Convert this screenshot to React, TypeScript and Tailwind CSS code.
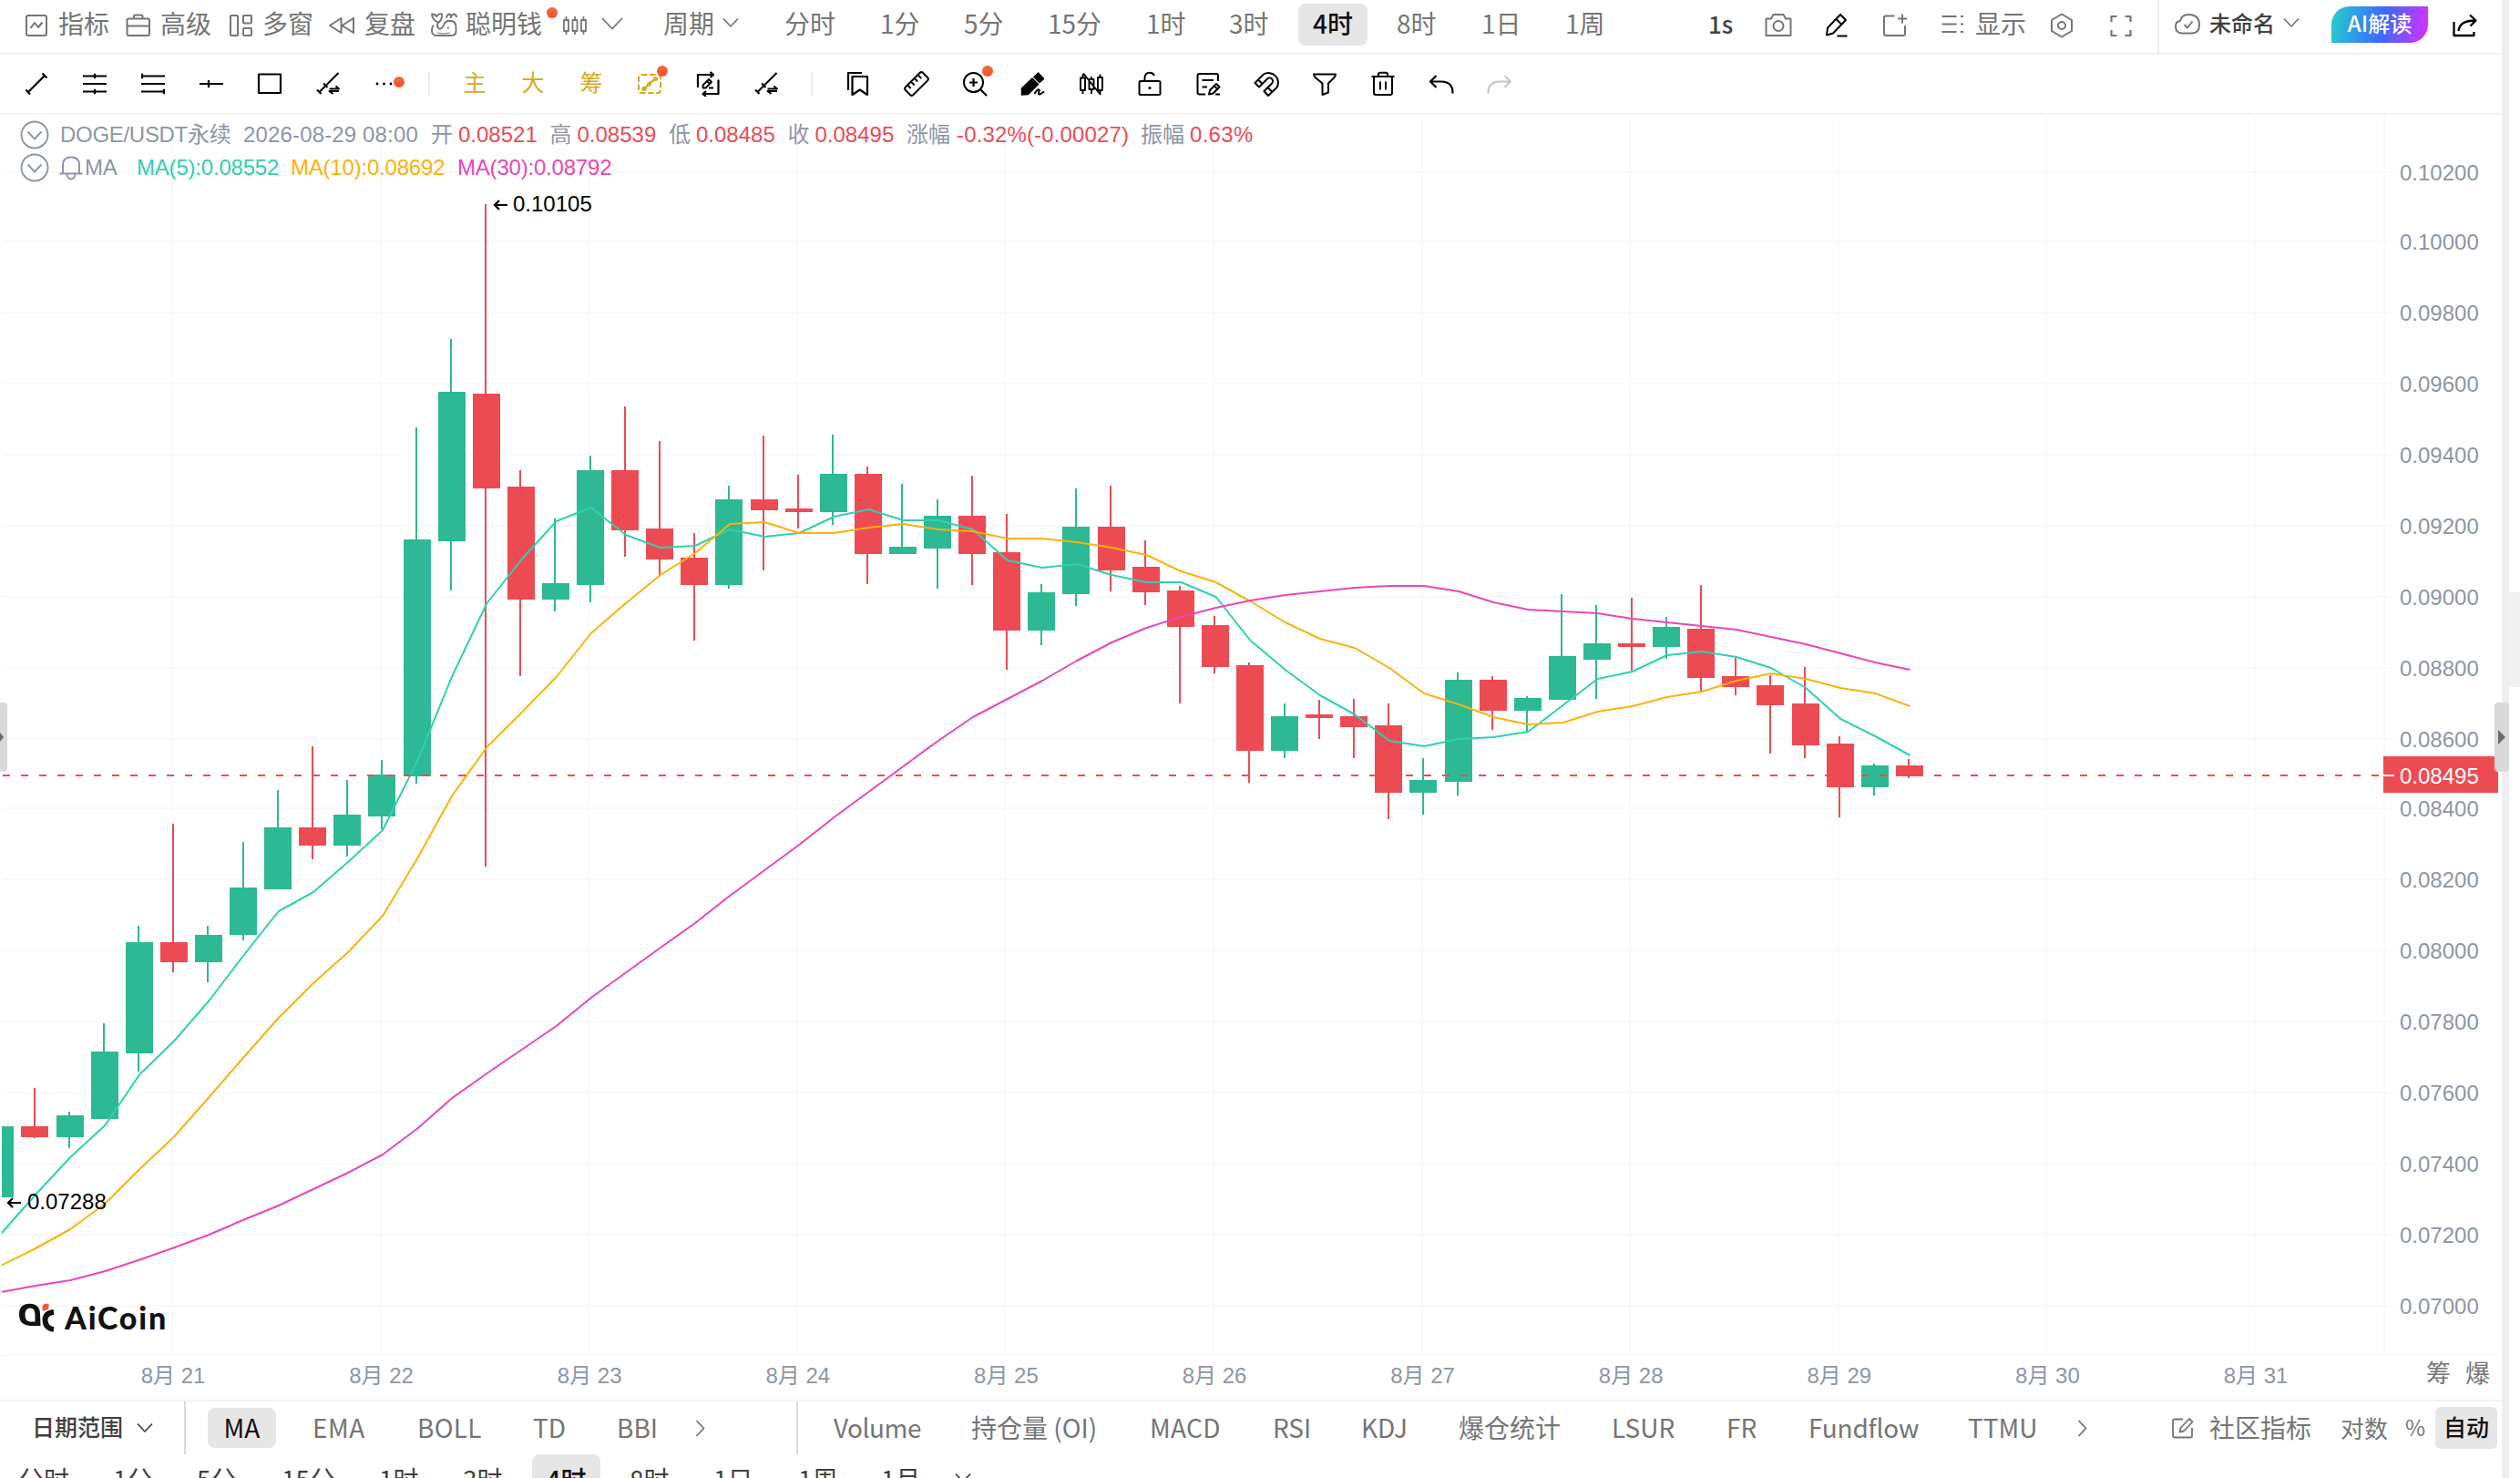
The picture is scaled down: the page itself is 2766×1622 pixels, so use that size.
import React from "react";

type Kids = { children?: React.ReactNode };

/* ---------- market data (vertical positions on the price canvas) ---------- */

type Candle = [up: 0 | 1, high: number, top: number, bottom: number, low: number];

const CANDLES: Candle[] = [
  [1, 1236, 1236, 1314, 1314], [0, 1194, 1236, 1248, 1249], [1, 1220, 1224, 1248, 1260],
  [1, 1123, 1154, 1228, 1228], [1, 1016, 1034, 1156, 1176], [0, 904, 1034, 1056, 1067],
  [1, 1016, 1026, 1056, 1078], [1, 924, 974, 1026, 1032], [1, 867, 908, 976, 976],
  [0, 819, 908, 928, 943], [1, 856, 894, 928, 940], [1, 834, 850, 896, 910],
  [1, 469, 592, 852, 860], [1, 372, 430, 594, 648], [0, 224, 432, 536, 951],
  [0, 516, 534, 658, 742], [1, 569, 640, 658, 671], [1, 500, 516, 642, 661],
  [0, 446, 516, 582, 611], [0, 484, 580, 614, 632], [0, 585, 612, 642, 703],
  [1, 533, 548, 642, 646], [0, 478, 548, 560, 626], [0, 521, 558, 562, 580],
  [1, 477, 520, 562, 576], [0, 512, 520, 608, 641], [1, 531, 600, 608, 608],
  [1, 548, 566, 602, 646], [0, 522, 566, 608, 642], [0, 564, 606, 692, 735],
  [1, 641, 650, 692, 708], [1, 536, 578, 652, 665], [0, 533, 578, 626, 649],
  [0, 593, 622, 650, 664], [0, 643, 648, 688, 772], [0, 676, 686, 732, 739],
  [0, 727, 730, 824, 859], [1, 772, 786, 824, 832], [0, 768, 784, 788, 811],
  [0, 767, 786, 798, 832], [0, 772, 796, 870, 899], [1, 832, 856, 870, 894],
  [1, 738, 746, 858, 873], [0, 742, 746, 780, 801], [1, 764, 766, 780, 803],
  [1, 652, 720, 768, 768], [1, 664, 706, 724, 767], [0, 656, 706, 710, 736],
  [1, 677, 688, 710, 723], [0, 642, 690, 744, 760], [0, 722, 742, 754, 763],
  [0, 741, 752, 774, 827], [0, 732, 772, 818, 832], [0, 808, 816, 864, 897],
  [1, 838, 840, 864, 873], [0, 833, 840, 852, 854],
];

const MA5 = [1354, 1311, 1270, 1235, 1179, 1142, 1098, 1048, 1000, 979, 946, 911, 835, 742, 662, 614, 572, 557, 587, 601, 599, 581, 589, 585, 567, 559, 571, 571, 581, 615, 623, 619, 631, 639, 639, 655, 703, 735, 763, 784, 813, 819, 811, 809, 803, 774, 745, 737, 719, 715, 721, 733, 755, 789, 808, 829];
const MA10 = [1389, 1370, 1349, 1321, 1283, 1247, 1204, 1160, 1117, 1079, 1045, 1005, 942, 873, 820, 782, 743, 695, 662, 631, 607, 575, 573, 585, 585, 579, 575, 581, 583, 591, 591, 595, 601, 609, 627, 639, 660, 683, 701, 711, 733, 761, 773, 787, 795, 793, 781, 775, 765, 759, 747, 739, 745, 755, 761, 775];
const MA30 = [1418, 1411, 1405, 1395, 1382.5, 1369, 1355, 1338.5, 1323, 1305, 1287, 1267, 1238.5, 1205, 1178, 1152, 1126, 1095, 1067.5, 1040, 1013, 983, 955, 927, 897, 869, 841, 813, 787, 767, 747, 725, 705, 689, 677, 667, 659, 653, 649, 645, 643, 643, 649, 661, 669, 671, 673, 679, 683, 687, 691, 699, 707, 717, 727, 735];

const xAt = (i: number) => 0.3 + 38.1 * i;
const linePoints = (ys: number[]) => ys.map((y, i) => `${(xAt(i) + 0.7).toFixed(1)},${y}`).join(" ");
/* grid rows snap to whole two-pixel steps */
const rowY = (i: number) => 2 * Math.floor((188 + i * 77.75) / 2) + 1;

const PRICES = ["0.10200", "0.10000", "0.09800", "0.09600", "0.09400", "0.09200", "0.09000", "0.08800", "0.08600", "0.08400", "0.08200", "0.08000", "0.07800", "0.07600", "0.07400", "0.07200", "0.07000"];
const DAYS = ["21", "22", "23", "24", "25", "26", "27", "28", "29", "30", "31"];

function PriceChart() {
  return (
    <svg width="2746" height="1410" viewBox="0 126 2746 1410" className="block" fontFamily='"Liberation Sans", "Noto Sans CJK SC", sans-serif' fontSize="24">
      <clipPath id="plot"><rect x="2" y="126" width="2614" height="1361" /></clipPath>
      <g stroke="#f8f9fa" strokeWidth="2">
        {PRICES.map((p, i) => <line key={p} x1="3" x2="2628" y1={rowY(i)} y2={rowY(i)} />)}
        {DAYS.map((d, i) => <line key={d} y1="128" y2="1487" x1={Math.round(189 + i * 228.6)} x2={Math.round(189 + i * 228.6)} />)}
        <line x1="2617" x2="2617" y1="126" y2="1487" />
        <line x1="2" x2="2742" y1="1487" y2="1487" />
      </g>
      <g clipPath="url(#plot)">
        {CANDLES.map(([up, high, top, bottom, low], i) => {
          const x = xAt(i);
          return (
            <g key={i} fill={up ? "#2db994" : "#ed4b54"}>
              <rect x={Math.floor(x) - 1} y={high} width="2" height={low - high} />
              <rect x={Math.round(x - 15)} y={top} width="30" height={bottom - top} />
            </g>
          );
        })}
        <g fill="none" strokeWidth="2" strokeLinejoin="round">
          <polyline points={linePoints(MA5)} stroke="#2fd1b2" />
          <polyline points={linePoints(MA10)} stroke="#fcb20c" />
          <polyline points={linePoints(MA30)} stroke="#e947b8" />
        </g>
      </g>
      <line x1="3" x2="2616" y1="851" y2="851" stroke="#ed4b54" strokeWidth="2" strokeDasharray="8 12" />
      <g fill="#8d96a5">
        {PRICES.map((p, i) => <text key={p} x="2634" y={rowY(i) + 9}>{p}</text>)}
        {DAYS.map((d, i) => <text key={d} x={190 + i * 228.6} y="1518" textAnchor="middle">8月 {d}</text>)}
      </g>
      <rect x="2616" y="830" width="126" height="40" fill="#ed4b54" />
      <line x1="2616" x2="2628" y1="851" y2="851" stroke="#fff" strokeWidth="2" />
      <text x="2634" y="860" fill="#fff">0.08495</text>
      <g fill="#000" stroke="none">
        <text x="563" y="232">0.10105</text>
        <text x="30" y="1327">0.07288</text>
      </g>
      <g fill="none" stroke="#000" strokeWidth="2.2">
        <path d="M557 225H543M548 220L543 225L548 230" />
        <path d="M23 1320H9M14 1315L9 1320L14 1325" />
      </g>
    </svg>
  );
}

/* ---------- icons ---------- */

function Ico({ children, w = 28, sw = 2, className = "" }: Kids & { w?: number; sw?: number; className?: string }) {
  return (
    <svg width={w} height="28" viewBox={`0 0 ${w} 28`} fill="none" stroke="currentColor" strokeWidth={sw} strokeLinejoin="round" className={`shrink-0 ${className}`}>
      {children}
    </svg>
  );
}

const Down = ({ className = "" }: { className?: string }) => (
  <Ico w={18} sw={1.7} className={className}><path d="M1 9.5L9 18L17 9.5" /></Ico>
);
const Right = ({ className = "" }: { className?: string }) => (
  <Ico w={12} sw={1.8} className={className}><path d="M1.5 6L9.5 14.5L1.5 23" /></Ico>
);
const Dot = ({ className = "" }: { className?: string }) => (
  <span className={`absolute size-3 rounded-full bg-gradient-to-b from-[#ee6b3c] to-[#ff4e2c] ${className}`} />
);

const MeasureIcon = () => (
  <Ico>
    <path d="M25.5 2L4 23.5M2 20.5L6.5 25M9 13.5L13.5 18" />
    <path d="M15.5 19.5H26L22.5 16.5M26 22H15.5L19.5 25" strokeWidth="1.9" />
  </Ico>
);

/* ---------- top bar ---------- */

const Slot = ({ children, className = "" }: Kids & { className?: string }) => (
  <div className={`relative flex h-full shrink-0 items-center whitespace-nowrap ${className}`}>{children}</div>
);

function TopBar() {
  return (
    <div className="flex h-[60px] w-[2746px] shrink-0 items-center border-b-2 border-[#f3f3f3] pb-2 text-[28px] text-[#757575]">
      <Slot className="ml-[26px] w-[38px] pt-1.5">
        <Ico><rect x="3" y="3" width="22" height="22" rx="2" /><path d="M7.500 17L12 11L16 16L20.500 10.500" /></Ico>
      </Slot>
      <Slot className="w-[74px]">指标</Slot>
      <Slot className="w-[38px] pt-1.5">
        <Ico><rect x="1.500" y="6.500" width="24.500" height="18.500" rx="2" /><path d="M1.500 14.500H26M9 6.500V4Q9 2.500 10.500 2.500H17Q18.500 2.500 18.500 4V6.500" /></Ico>
      </Slot>
      <Slot className="w-[74px]">高级</Slot>
      <Slot className="w-[38px] pt-1.5">
        <Ico><rect x="3" y="3" width="8" height="22" rx="1" /><rect x="17" y="3" width="9" height="8.500" rx="1" /><rect x="17" y="17" width="9" height="8" rx="1" /></Ico>
      </Slot>
      <Slot className="w-[72px]">多窗</Slot>
      <Slot className="w-[40px] pt-1.5">
        <Ico w={30}><path d="M14.500 6V22L2 14ZM28 6V22L15.500 14Z" /></Ico>
      </Slot>
      <Slot className="w-[72px]">复盘</Slot>
      <Slot className="w-[39px] pt-1">
        <Ico w={32} sw={1.9}>
          <path d="M10 12Q2.500 9.500 2 2.500Q5.500 2 7.200 5Q9.500 1.500 13 2.500Q13.500 9 9 12Q6.500 15.500 10 18.500Q13 19.500 15 14.500Q17 9.800 21.500 9.800Q28.500 10 28.500 16.500V21Q28.500 26 23.500 26H7.500Q2 26 2 20.500Q2 16.500 4 15" />
          <path d="M18 6.500Q18.500 3 21.500 2.500Q23 3 23 7M23 7Q23 3 26.500 2.500Q29 3 29 6" />
          <path d="M8 23Q14 25 22 23" strokeWidth="1" />
          <circle cx="20" cy="17.500" r="0.700" fill="currentColor" strokeWidth="1" />
        </Ico>
      </Slot>
      <Slot className="w-[106px]">聪明钱<Dot className="left-[89px] top-2" /></Slot>
      <Slot className="w-[43px] pt-1">
        <Ico><path d="M2 9H7V21H2ZM11.500 9H16.500V21H11.500ZM21 9H26V21H21ZM4.500 5V9M4.500 21V25M14 5V9M14 21V25M23.500 5V9M23.500 21V25" strokeWidth="1.800" /></Ico>
      </Slot>
      <Slot className="w-[68px]">
        <Ico w={24} sw={1.8}><path d="M1 9L12 20.500L23 9" /></Ico>
      </Slot>
      <Slot className="w-[65px]">周期</Slot>
      <Slot className="w-[68px]"><Down /></Slot>
      <Slot className="w-[105px]">分时</Slot>
      <Slot className="w-[92px]">1分</Slot>
      <Slot className="w-[92px]">5分</Slot>
      <Slot className="w-[108px]">15分</Slot>
      <Slot className="w-[91px]">1时</Slot>
      <Slot className="w-[76px]">3时</Slot>
      <div className="mr-[32px] mt-1 flex h-[46px] w-[76px] shrink-0 items-center justify-center rounded-lg bg-[#e6e6e6] pb-1 font-medium text-[#111]">4时</div>
      <Slot className="w-[93px]">8时</Slot>
      <Slot className="w-[92px]">1日</Slot>
      <Slot className="w-[157px]">1周</Slot>
      <Slot className="w-[62px] text-[26px] font-medium text-[#444]">1s</Slot>
      <Slot className="w-[64px] pt-1.5">
        <Ico w={30}><path d="M1.500 6.500H7L9.500 2H20.500L23 6.500H28.500V25H1.500Z" /><circle cx="15" cy="14.500" r="5.500" /></Ico>
      </Slot>
      <Slot className="w-[65px] pt-1.5 text-black">
        <Ico w={30}><path d="M5 16.500L19 2L25 8L11 22.500L4 24.500ZM14.500 7L20.500 13M15.500 25.500H26.500" /></Ico>
      </Slot>
      <Slot className="w-[64px] pt-1.5">
        <Ico><path d="M13.500 3.500H4Q2 3.500 2 5.500V23Q2 25 4 25H23Q25 25 25 23V14M22 1.500V11.500M17 6.500H27" /></Ico>
      </Slot>
      <Slot className="w-[38px] pt-0.5">
        <Ico sw={2.2}><path d="M1.500 6H17.500M1.500 14.500H17.500M1.500 23H17.500M22 6H25M22 14.500H25M22 23H25" /></Ico>
      </Slot>
      <Slot className="w-[81px]">显示</Slot>
      <Slot className="w-[65px] pt-1.5">
        <Ico><path d="M14 1.500L25 8V20L14 26.500L3 20V8Z" /><circle cx="14" cy="14" r="4" /></Ico>
      </Slot>
      <Slot className="w-[54px] pt-1.5">
        <Ico><path d="M9.500 4H3.500V10M18.500 4H24.500V10M9.500 25H3.500V19M18.500 25H24.500V19" strokeWidth="2.200" /></Ico>
      </Slot>
      <div className="-mb-2 mr-4 h-[60px] w-0.5 shrink-0 bg-[#ebebeb]" />
      <Slot className="w-[39px] pt-0.5">
        <Ico w={30}><path d="M9 24.500Q2 24 2 17Q2 11.500 7 11Q8.500 4 16 4Q28 4 28 15Q28 24.500 20 24.500Z" /><path d="M11.500 15L15 18.500L20.500 11.500" /></Ico>
      </Slot>
      <Slot className="w-[81px] text-[24px] font-medium text-[#3f3f3f]">未命名</Slot>
      <Slot className="w-[53px]"><Down /></Slot>
      <div className="mr-[26px] mt-1 flex h-10 w-[106px] shrink-0 items-center justify-center rounded-br-[20px] rounded-tl-[20px] bg-[linear-gradient(100deg,#27c8cf_4%,#3a6bff_52%,#c637ff_94%)] pb-1 text-[24px] font-medium text-white">AI解读</div>
      <Slot className="pt-1.5 text-black">
        <Ico w={30} sw={2.3}><path d="M2.500 10V25H24.500V21M7.500 20Q8.500 8.500 26 8.500M20 2.500L26.500 8.500L20.500 14.500" /></Ico>
      </Slot>
    </div>
  );
}

/* ---------- drawing tools ---------- */

const Cell = ({ children, className = "" }: Kids & { className?: string }) => (
  <div className={`relative flex h-full w-16 shrink-0 items-center justify-center ${className}`}>{children}</div>
);

function DrawBar() {
  return (
    <div className="flex h-[66px] w-[2746px] shrink-0 items-center border-b-2 border-[#f3f3f3] text-black">
      <div className="ml-2 flex h-full w-[462px] items-center">
        <Cell><Ico sw={2.2}><path d="M5 23L23 5M20.500 2.500L25.500 7.500M2.500 20.500L7 25.500" /></Ico></Cell>
        <Cell><Ico sw={2.2}><path d="M1 5.500H27M1 14H27M1 22.500H27M14 2.800V8.200M14 19.800V25.200" /></Ico></Cell>
        <Cell><Ico sw={2.2}><path d="M1 5.500H27M1 14H27M1 22.500H27M2 2.800V8.200M26 19.800V25.200" /></Ico></Cell>
        <Cell><Ico sw={2.2}><path d="M1 14H27M11 10V18" /></Ico></Cell>
        <Cell><Ico sw={2.2}><rect x="2" y="3.500" width="24" height="20.500" /></Ico></Cell>
        <Cell><MeasureIcon /></Cell>
        <Cell>
          <Ico><g fill="currentColor" stroke="none"><circle cx="4" cy="14" r="1.400" /><circle cx="11.500" cy="14" r="1.400" /><circle cx="19" cy="14" r="1.400" /></g></Ico>
          <Dot className="left-[40px] top-[24px]" />
        </Cell>
      </div>
      <div className="h-[26px] w-0.5 bg-[#ededed]" />
      <div className="ml-[17px] flex h-full w-[401px] items-center text-[25px] text-[#d8aa22]">
        <Cell className="pb-1">主</Cell>
        <Cell className="pb-1">大</Cell>
        <Cell className="pb-1">筹</Cell>
        <Cell>
          <Ico><rect x="2" y="4" width="24" height="20" rx="3" strokeDasharray="6.500 2.600" /><path d="M8 20L13 14L21 8" strokeWidth="2.600" /><g fill="currentColor" stroke="none"><circle cx="8" cy="19.500" r="2.700" /><circle cx="13.500" cy="14.500" r="2.400" /><circle cx="20.500" cy="8.500" r="2.500" /></g></Ico>
          <Dot className="left-[40px] top-3" />
        </Cell>
        <Cell className="text-black">
          <Ico sw={2.2}><path d="M3 18V4H20M16.500 1L20 4L16.500 7M25.500 9.500V25H8.500M12 22L8.500 25L12 28" /><path d="M8.500 18.500V15.500L15 9L18 12L11.500 18.500ZM13 11L16 14M15 18.500H20" strokeWidth="1.800" /></Ico>
        </Cell>
        <Cell className="text-black"><MeasureIcon /></Cell>
      </div>
      <div className="h-[26px] w-0.5 bg-[#ededed]" />
      <div className="ml-[18px] flex h-full items-center">
        <Cell><Ico><path d="M3 21V2H18M7.500 6H24V26L15.800 20.500L7.500 26Z" strokeWidth="2.200" /></Ico></Cell>
        <Cell><Ico><g transform="rotate(-45 14 14)"><rect x="0.500" y="8" width="27" height="12" rx="2.500" /><path d="M6 8V13M11.300 8V13.500M16.600 8V13M22 8V13.500" /></g></Ico></Cell>
        <Cell><Ico><circle cx="12.500" cy="12.500" r="10.500" /><path d="M20 20L27 27M12.500 8V17M8 12.500H17" strokeWidth="2.200" /></Ico><Dot className="left-[40px] top-3" /></Cell>
        <Cell>
          <Ico>
            <path d="M1.500 26V19L13 8L19.500 14.500L8.500 25.500Z" fill="currentColor" strokeWidth="1.500" />
            <path d="M15 6.500L19.500 2L25.500 8.500L21 12.500Z" fill="currentColor" strokeWidth="1.500" />
            <path d="M15.500 25Q19 18.500 21 21Q18.500 26 21.500 25.500L26 22.500" />
          </Ico>
        </Cell>
        <Cell><Ico><path d="M2 7.500H7V21H2ZM11.500 9H16.500V20H11.500ZM21 7H26V21H21ZM4.500 3.500V7.500M4.500 21V25M14 6V9M14 20V25M23.500 3.500V7M23.500 21V25M5 2.500L24 26" strokeWidth="1.900" /></Ico></Cell>
        <Cell><Ico><rect x="2.500" y="11" width="23" height="15" rx="1.500" /><path d="M8.500 11V7Q9 1.800 14 1.800Q17.500 1.800 19 5" /><circle cx="14" cy="18.500" r="1.500" fill="currentColor" stroke="none" /></Ico></Cell>
        <Cell><Ico><path d="M25 11V5Q25 3 23 3H4.500Q2.500 3 2.500 5V23.500Q2.500 25.500 4.500 25.500H11M7.500 10H20M7.500 17.500H13M15 25.500L16 21L23 14L26.500 17.500L19.500 24.500ZM21 16.500L24.500 20M22 25.500H27" /></Ico></Cell>
        <Cell><Ico><path d="M1.500 13L11 3.500A10.600 10.600 0 0 1 25.500 18L16 27L11.500 22L20 13.500A3.500 3.500 0 0 0 15 8.500L6 17.500ZM5 9.500L9.500 14M15.500 18L20 22.500" /></Ico></Cell>
        <Cell><Ico><path d="M2 3.500H26L25 6.500L18 13.500V23.500L11.500 26V13.500L3 6.500Z" /></Ico></Cell>
        <Cell><Ico><path d="M1.500 6H26.500M4 6V24Q4 26 6 26H22Q24 26 24 24V6M9 6V3.500Q9 1.800 11 1.800H17Q19 1.800 19 3.500V6M11 11.500V20.500M17 11.500V20.500" /></Ico></Cell>
        <Cell><Ico sw={2.2}><path d="M8.500 5L2 11.500L8.500 18M2 11.500H14Q27 12 26.500 24.500" /></Ico></Cell>
        <Cell className="text-[#c4c4c4]"><Ico><path d="M19.500 5L26 11.500L19.500 18M26 11.500H14Q1 12 1.500 24.500" /></Ico></Cell>
      </div>
    </div>
  );
}

/* ---------- legend ---------- */

const Fold = () => (
  <svg width="32" height="32" viewBox="0 0 32 32" fill="none" stroke="currentColor" strokeWidth="1.900" className="shrink-0">
    <circle cx="16" cy="16" r="14.500" /><path d="M8.500 12.500L16 20.500L23.500 12.500" />
  </svg>
);

function Legend() {
  const ohlc = [["开", "0.08521"], ["高", "0.08539"], ["低", "0.08485"], ["收", "0.08495"]];
  return (
    <div className="absolute left-[22px] top-1 whitespace-nowrap text-[24px] text-[#8d96a5] [font-family:'Liberation_Sans','Noto_Sans_CJK_SC',sans-serif]">
      <div className="flex h-9 items-center">
        <Fold />
        <span className="ml-[12px] w-[201px] tracking-[-0.3px]">DOGE/USDT永续</span>
        <span className="w-[206px] tracking-[0.150px]">2026-08-29 08:00</span>
        {ohlc.map(([k, v]) => (
          <span key={k} className="flex w-[130.500px]">
            <span className="w-[30px]">{k}</span><span className="text-[#ed4b54]">{v}</span>
          </span>
        ))}
        <span className="w-[55px]">涨幅</span>
        <span className="w-[202px] tracking-[0.150px] text-[#ed4b54]">-0.32%(-0.00027)</span>
        <span className="w-[54px]">振幅</span>
        <span className="tracking-[0.300px] text-[#ed4b54]">0.63%</span>
      </div>
      <div className="flex h-9 items-center tracking-[-0.200px]">
        <Fold />
        <Ico className="ml-2.5" w={28}><path d="M1.500 20.500H26.500M5 20V11Q5 2.500 14 2.500Q23 2.500 23 11V20M9.500 21Q10 26.500 14 26.500Q18 26.500 18.500 21" /></Ico>
        <span className="ml-[1px] w-[57px]">MA</span>
        <span className="w-[169px] text-[#2fd1b2]">MA(5):0.08552</span>
        <span className="w-[183px] text-[#fcb20c]">MA(10):0.08692</span>
        <span className="text-[#e947b8]">MA(30):0.08792</span>
      </div>
    </div>
  );
}

function Brand() {
  return (
    <div className="absolute left-5 top-[1302px] flex items-center text-[#111]">
      <svg width="42" height="36" viewBox="0 0 42 36" fill="none" stroke="#111">
        <path d="M24.500 27H13Q1 26 1 14.500Q1 3 12.500 2.700Q24 3 24 14.500ZM18.500 22.500V14.500Q18.500 7.500 13 7.500Q7.500 7.500 7.500 15Q7.500 22.500 13.500 22.500Z" fill="#111" fillRule="evenodd" stroke="none" />
        <path d="M39 12Q29.500 13 29.500 20.500Q29.500 29.500 39 31" strokeWidth="5.800" />
        <path d="M26.500 10.500V6.500Q27 3 30.500 2.700H33.500V6.500Q33 10.500 26.500 10.500Z" fill="#fb5432" stroke="none" />
      </svg>
      <span className="ml-[9px] text-[34px] font-black leading-[36px] tracking-[1.800px] [font-family:Lato,sans-serif]">AiCoin</span>
    </div>
  );
}

/* ---------- bottom bars ---------- */

function IndicatorBar() {
  return (
    <div className="flex h-[60px] w-[2746px] shrink-0 items-center border-t-2 border-[#f3f3f3] text-[28px] text-[#757575]">
      <Slot className="ml-[35px] w-[115px] pb-0.5 text-[25px] font-medium text-[#3f3f3f]">日期范围</Slot>
      <Slot className="w-[52px] text-[#3f3f3f]"><Down /></Slot>
      <div className="mr-6 h-full w-0.5 shrink-0 bg-[#d9d9d9]" />
      <div className="mr-[40px] flex h-11 w-[75px] shrink-0 items-center justify-center rounded-lg bg-[#e6e6e6] pb-0.5 text-[#111]">MA</div>
      <Slot className="w-[115px] pb-0.5 tracking-[0.500px]">EMA</Slot>
      <Slot className="w-[127px] pb-0.5 tracking-[0.300px]">BOLL</Slot>
      <Slot className="w-[92px] pb-0.5">TD</Slot>
      <Slot className="w-[86px] pb-0.5">BBI</Slot>
      <Slot className="w-[111px]"><Right /></Slot>
      <div className="mr-[39px] h-full w-0.5 shrink-0 bg-[#d9d9d9]" />
      <Slot className="w-[151px] pb-0.5 tracking-[-0.5px]">Volume</Slot>
      <Slot className="w-[196px] pb-0.5">持仓量 (OI)</Slot>
      <Slot className="w-[135px] pb-0.5 tracking-[0.300px]">MACD</Slot>
      <Slot className="w-[97px] pb-0.5">RSI</Slot>
      <Slot className="w-[107px] pb-0.5">KDJ</Slot>
      <Slot className="w-[168px] pb-0.5">爆仓统计</Slot>
      <Slot className="w-[126px] pb-0.5">LSUR</Slot>
      <Slot className="w-[90px] pb-0.5">FR</Slot>
      <Slot className="w-[175px] pb-0.5 tracking-[-0.2px]">Fundflow</Slot>
      <Slot className="w-[120px] pb-0.5">TTMU</Slot>
      <Slot className="w-[102px]"><Right /></Slot>
      <Slot className="w-[43px]">
        <Ico><path d="M14 4.500H5Q3 4.500 3 6.500V22.500Q3 24.500 5 24.500H22Q24 24.500 24 22.500V14M10.500 18.500L11.500 14L21 4L24.500 7.500L15 17.500Z" strokeWidth="1.800" /></Ico>
      </Slot>
      <Slot className="w-[144px] pb-0.5">社区指标</Slot>
      <Slot className="w-[71px] pb-0.5 text-[26px]">对数</Slot>
      <Slot className="w-[33px] pb-0.5 text-[24px]">%</Slot>
      <div className="flex h-[46px] w-[68px] shrink-0 items-center justify-center rounded-md bg-[#e6e6e6] pb-0.5 text-[25px] font-medium text-[#111]">自动</div>
    </div>
  );
}

function PeriodBar() {
  return (
    <div className="flex h-[60px] w-[2746px] shrink-0 items-center text-[28px] text-[#3f3f3f]">
      <Slot className="ml-[20px] w-[104px] pb-1.5">分时</Slot>
      <Slot className="w-[92px] pb-1.5">1分</Slot>
      <Slot className="w-[93px] pb-1.5">5分</Slot>
      <Slot className="w-[107px] pb-1.5">15分</Slot>
      <Slot className="w-[92px] pb-1.5">1时</Slot>
      <Slot className="w-[76px] pb-1.5">3时</Slot>
      <div className="mr-[32px] flex h-full w-[75px] shrink-0 items-center justify-center rounded-t-lg bg-[#e6e6e6] pb-1.5 font-medium text-[#111]">4时</div>
      <Slot className="w-[92px] pb-1.5">8时</Slot>
      <Slot className="w-[93px] pb-1.5">1日</Slot>
      <Slot className="w-[91px] pb-1.5">1周</Slot>
      <Slot className="w-[81px] pb-1.5">1月</Slot>
      <Slot className="pb-2"><Down /></Slot>
    </div>
  );
}

export default function App() {
  return (
    <div className="flex h-[1622px] w-[2766px] overflow-hidden bg-white [font-family:'Noto_Sans_CJK_SC',sans-serif]">
      <main className="flex w-[2746px] shrink-0 flex-col">
        <TopBar />
        <DrawBar />
        <section className="relative h-[1410px] shrink-0">
          <PriceChart />
          <Legend />
          <Brand />
          <div className="absolute bottom-[12px] right-[13px] flex gap-4 text-[27px] leading-[36px] text-[#757575]"><span>筹</span><span>爆</span></div>
          <div className="absolute left-0 top-[645px] flex h-[76px] w-2 items-center rounded-r bg-[#d9d9d9]">
            <svg width="5" height="12" viewBox="0 0 5 12"><path d="M0 1L4 6L0 11Z" fill="#6b6b6b" /></svg>
          </div>
          <div className="absolute -right-2 top-[645px] z-10 flex h-[76px] w-4 items-center justify-center rounded bg-[#d9d9d9]">
            <svg width="8" height="16" viewBox="0 0 8 16"><path d="M0 0L8 8L0 16Z" fill="#6b6b6b" /></svg>
          </div>
        </section>
        <IndicatorBar />
        <PeriodBar />
      </main>
      <div className="w-2 shrink-0 bg-[#efefef]" />
      <aside className="w-3 shrink-0 pt-[650px]">
        <div className="h-[104px] bg-[#f1f1f1]" />
      </aside>
    </div>
  );
}
